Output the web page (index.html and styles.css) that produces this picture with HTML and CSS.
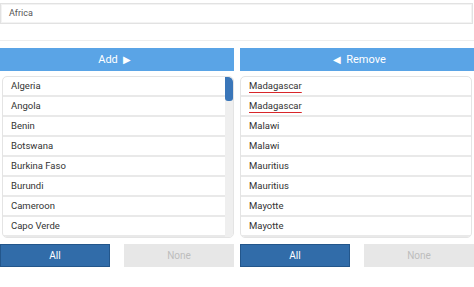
FILE: index.html
```html
<!DOCTYPE html>
<html lang="en">
<head>
    <meta charset="UTF-8">
    <title>Countries</title>
    <link rel="stylesheet" href="styles.css">
</head>
<body>
<div class="Picker">
    <div class="Picker-search">Africa</div>
    <div class="Picker-divider"></div>
    <div class="Picker-columns">
        <div class="Column Column--left">
            <div class="Btn Btn--move">Add <span class="Arrow">&#9654;</span></div>
            <div class="List List--scroll">
                <ul class="List-items">
                    <li>Algeria</li>
                    <li>Angola</li>
                    <li>Benin</li>
                    <li>Botswana</li>
                    <li>Burkina Faso</li>
                    <li>Burundi</li>
                    <li>Cameroon</li>
                    <li>Capo Verde</li>
                </ul>
                <div class="Scrollbar"><div class="Scrollbar-thumb"></div></div>
            </div>
            <div class="Actions">
                <div class="Btn Btn--all">All</div>
                <div class="Btn Btn--none">None</div>
            </div>
        </div>
        <div class="Column Column--right">
            <div class="Btn Btn--move"><span class="Arrow">&#9664;</span> Remove</div>
            <div class="List">
                <ul class="List-items">
                    <li><span class="Spell">Madagascar</span></li>
                    <li><span class="Spell">Madagascar</span></li>
                    <li>Malawi</li>
                    <li>Malawi</li>
                    <li>Mauritius</li>
                    <li>Mauritius</li>
                    <li>Mayotte</li>
                    <li>Mayotte</li>
                </ul>
            </div>
            <div class="Actions">
                <div class="Btn Btn--all">All</div>
                <div class="Btn Btn--none">None</div>
            </div>
        </div>
    </div>
</div>
</body>
</html>
```

FILE: styles.css
```css
html, body {
    margin: 0;
    padding: 0;
    background: #fff;
}
body {
    font-family: Roboto, "Liberation Sans", sans-serif;
    -webkit-font-smoothing: antialiased;
    width: 474px;
    height: 287px;
    overflow: hidden;
}
.Picker {
    padding-top: 3px;
}
.Picker-search {
    height: 19px;
    margin-right: 1px;
    border: 1px solid #e2e2e2;
    box-shadow: inset 0 0 0 1px #f3f3f3;
    padding-left: 8px;
    font-size: 9px;
    line-height: 19px;
    color: #555;
}
.Picker-divider {
    height: 1px;
    background: #eee;
    margin-top: 16px;
}
.Picker-columns {
    display: grid;
    grid-template-columns: 234px 234px;
    column-gap: 6px;
    margin-top: 7px;
}
.Column {
    display: flex;
    flex-direction: column;
}
.Btn {
    height: 23px;
    display: flex;
    align-items: center;
    justify-content: center;
    font-size: 10px;
    box-sizing: border-box;
}
.Btn--move {
    background: #5aa4e6;
    color: #fff;
    font-size: 11px;
}
.Arrow {
    font-size: 10px;
    margin: 0 5px;
}
.List {
    position: relative;
    height: 162px;
    margin-top: 5px;
    border: 1px solid #e4e4e4;
    border-radius: 5px;
    box-sizing: border-box;
    overflow: hidden;
}
.Column--left .List {
    margin-left: 2px;
}
.Column--right .List {
    margin-right: 2px;
}
.List-items {
    list-style: none;
    margin: 0;
    padding: 0;
}
.List--scroll .List-items {
    margin-right: 8px;
}
.List-items li {
    height: 18px;
    line-height: 18px;
    padding-left: 8px;
    font-size: 9.5px;
    color: #333;
    border-bottom: 2px solid #e9e9e9;
}
.Spell {
    text-decoration: underline;
    text-decoration-color: #d8262a;
    text-decoration-thickness: 1px;
    text-underline-offset: 3px;
}
.Scrollbar {
    position: absolute;
    top: 0;
    right: 0;
    bottom: 0;
    width: 8px;
    background: #efefef;
}
.Scrollbar-thumb {
    height: 24px;
    background: #3a76b9;
    border-radius: 0 5px 3px 3px;
}
.Actions {
    display: flex;
    justify-content: space-between;
    margin-top: 6px;
}
.Actions .Btn {
    width: 110px;
}
.Btn--all {
    background: #316ca9;
    border: 1px solid #23568b;
    color: #fff;
}
.Btn--none {
    background: #e7e7e7;
    color: #bdbdbd;
}
```
